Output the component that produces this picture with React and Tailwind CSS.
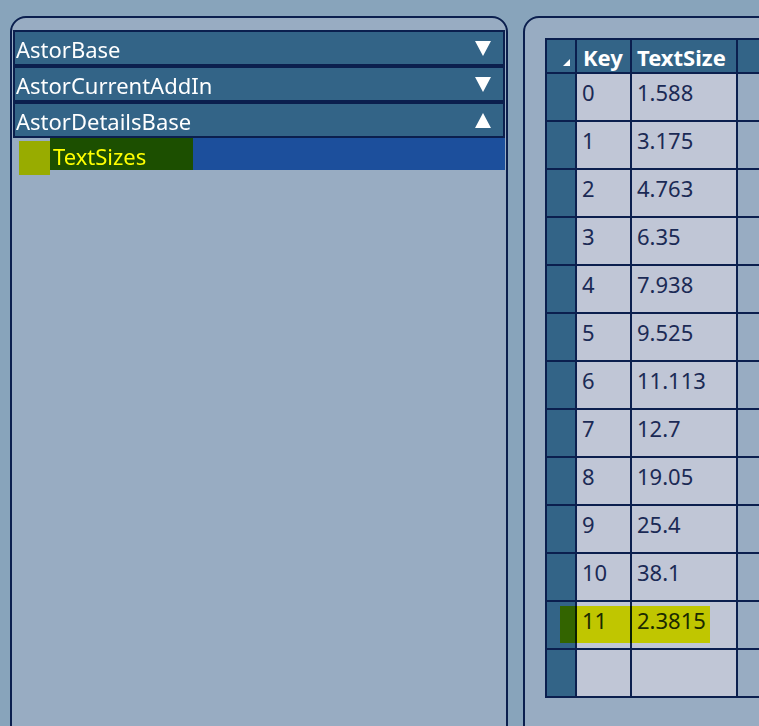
import React from 'react'

const font = { fontFamily: '"Noto Sans", "Open Sans", sans-serif' }

const groups = [
    { name: 'AstorBase', open: false },
    { name: 'AstorCurrentAddIn', open: false },
    { name: 'AstorDetailsBase', open: true },
]

const rows = [
    ['0', '1.588'], ['1', '3.175'], ['2', '4.763'], ['3', '6.35'],
    ['4', '7.938'], ['5', '9.525'], ['6', '11.113'], ['7', '12.7'],
    ['8', '19.05'], ['9', '25.4'], ['10', '38.1'], ['11', '2.3815'],
    ['', ''],
]

function Arrow({ up }) {
    return (
        <svg width="16" height="15" viewBox="0 0 16 15">
            {up
                ? <polygon points="8,0 16,15 0,15" fill="#fff" />
                : <polygon points="0,0 16,0 8,15" fill="#fff" />}
        </svg>
    )
}

export default function App() {
    return (
        <div className="w-[759px] h-[726px] overflow-hidden bg-[#88a4bb] flex items-start pl-[10px] pt-[16px] gap-[15px]" style={font}>
            {/* left panel */}
            <div className="relative shrink-0 w-[498px] h-[760px] bg-[#98acc2] border-2 border-[#0b1f4e] rounded-t-[16px] pt-[12px] px-[1px]">
                {groups.map(g => (
                    <div key={g.name} className="h-[36px] bg-[#336487] border-2 border-[#0b1f4e] flex items-center justify-between pl-[1px] pr-[12px] text-white text-[22px] leading-none">
                        <span className="pt-[2px]">{g.name}</span>
                        <Arrow up={g.open} />
                    </div>
                ))}
                <div className="pl-[37px]">
                    <div className="h-[32px] bg-[#1c4f9c] flex items-center pl-[3px] pt-[3px] text-white text-[22px] leading-none">
                        TextSizes
                    </div>
                </div>
                {/* highlighter marks */}
                <div className="absolute left-[7px] top-[123px] w-[31px] h-[34px] bg-[#ffff00] mix-blend-multiply" />
                <div className="absolute left-[38px] top-[120px] w-[143px] h-[32px] bg-[#ffff00] mix-blend-multiply" />
            </div>

            {/* right panel */}
            <div className="shrink-0 w-[270px] h-[760px] bg-[#98acc2] border-2 border-[#0b1f4e] rounded-t-[16px] pt-[20px] pl-[20px]">
                <div className="relative w-[260px] grid grid-cols-[28px_53px_104px_1fr] gap-[2px] p-[2px] bg-[#0b1f4e] text-[22px] leading-[28px]">
                    <div className="h-[32px] bg-[#336487] relative">
                        <svg className="absolute right-[5px] bottom-[6px]" width="7" height="7" viewBox="0 0 7 7">
                            <polygon points="7,0 7,7 0,7" fill="#fff" />
                        </svg>
                    </div>
                    <div className="h-[32px] bg-[#336487] text-white font-bold pl-[6px] pt-[3px]">Key</div>
                    <div className="h-[32px] bg-[#336487] text-white font-bold pl-[5px] pt-[3px]">TextSize</div>
                    <div className="h-[32px] bg-[#336487]" />
                    {rows.map((r, i) => (
                        <React.Fragment key={i}>
                            <div className="h-[46px] bg-[#336487]" />
                            <div className="h-[46px] bg-[#c0c6d6] text-[#1b2a55] pl-[5px] pt-[4px]">{r[0]}</div>
                            <div className="h-[46px] bg-[#c0c6d6] text-[#1b2a55] pl-[5px] pt-[4px]">{r[1]}</div>
                            <div className="h-[46px] bg-[#98acc2]" />
                        </React.Fragment>
                    ))}
                    <div className="absolute left-[15px] top-[568px] w-[150px] h-[37px] bg-[#ffff00] mix-blend-multiply" />
                </div>
            </div>
        </div>
    )
}
